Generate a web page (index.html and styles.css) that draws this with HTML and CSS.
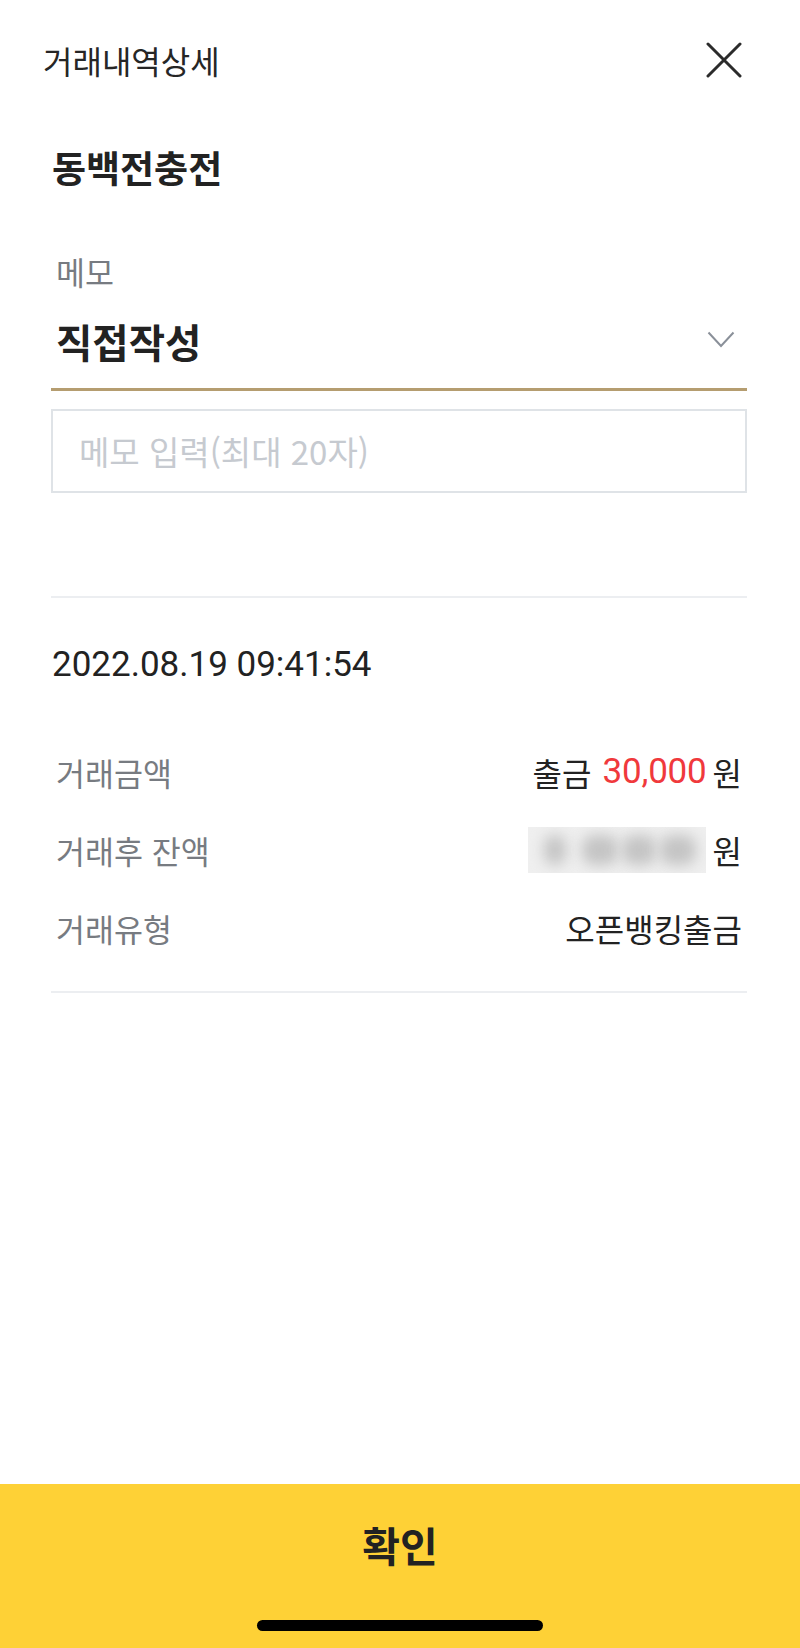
FILE: index.html
```html
<!DOCTYPE html>
<html lang="ko">
<head>
<meta charset="utf-8">
<title>거래내역상세</title>
<link rel="stylesheet" href="styles.css">
</head>
<body>
<div class="page">
  <header class="header">
    <h1 class="title">거래내역상세</h1>
    <button class="close" aria-label="닫기">
      <svg width="36" height="36" viewBox="0 0 36 36"><path d="M2 2 L34 34 M34 2 L2 34" stroke="#2b2b2b" stroke-width="3" stroke-linecap="round" fill="none"/></svg>
    </button>
  </header>

  <main class="content">
    <h2 class="merchant">동백전충전</h2>

    <div class="memo-label">메모</div>
    <div class="select">
      <span class="select-value">직접작성</span>
      <svg class="chev" width="28" height="17" viewBox="0 0 28 17"><path d="M1.5 1.5 L14 15 L26.5 1.5" stroke="#8a9099" stroke-width="2" fill="none"/></svg>
    </div>
    <div class="memo-input">메모 입력(최대 20자)</div>

    <div class="divider first"></div>

    <div class="date">2022.08.19 09:41:54</div>

    <div class="rows">
      <div class="row">
        <span class="label">거래금액</span>
        <span class="value">출금<span class="num red">30,000</span>원</span>
      </div>
      <div class="row">
        <span class="label">거래후 잔액</span>
        <span class="value"><span class="masked" aria-hidden="true"><span class="blob b1"></span><span class="blob b2"></span><span class="blob b3"></span><span class="blob b4"></span></span>원</span>
      </div>
      <div class="row">
        <span class="label">거래유형</span>
        <span class="value">오픈뱅킹출금</span>
      </div>
    </div>

    <div class="divider second"></div>
  </main>

  <footer class="confirm">
    <div class="confirm-label">확인</div>
    <div class="home-indicator"></div>
  </footer>
</div>
</body>
</html>
```

FILE: styles.css
```css
* { box-sizing: border-box; }
html, body { margin: 0; padding: 0; background: #fff; }
body {
  font-family: "Noto Sans CJK KR", "Noto Sans", sans-serif;
  color: #222;
}
.page {
  width: 800px;
  min-height: 1648px;
  display: flex;
  flex-direction: column;
}
.header {
  height: 120px;
  display: flex;
  align-items: center;
  justify-content: space-between;
  padding: 0 58px 0 43px;
}
.title {
  margin: 0;
  font-size: 32px;
  font-weight: 400;
  line-height: 40px;
  color: #262626;
}
.close {
  border: 0;
  background: none;
  padding: 0;
  width: 36px;
  height: 36px;
  display: block;
}
.close svg { display: block; }
.content {
  padding: 0 53px 0 51px;
  display: flex;
  flex-direction: column;
}
.merchant {
  margin: 27px 0 0 1px;
  font-size: 37px;
  font-weight: 700;
  line-height: 40px;
  color: #222;
}
.memo-label {
  margin: 66px 0 0 5px;
  font-size: 31.5px;
  line-height: 36px;
  color: #777b81;
}
.select {
  margin-top: 30px;
  padding: 0 12px 25px 5px;
  border-bottom: 3px solid #b59d70;
  display: flex;
  align-items: center;
  justify-content: space-between;
}
.select-value {
  font-size: 39.5px;
  font-weight: 700;
  line-height: 44px;
  color: #222;
}
.chev { display: block; margin-top: -3px; }
.memo-input {
  margin-top: 18px;
  height: 84px;
  border: 2px solid #dfe3e7;
  padding-left: 26px;
  display: flex;
  align-items: center;
  font-size: 33px;
  color: #c6cad0;
}
.divider {
  height: 2px;
  background: #eceef1;
}
.divider.first { margin-top: 103px; }
.divider.second { margin-top: 24px; }
.date {
  margin: 45px 0 0 1px;
  font-family: Roboto, "Noto Sans CJK KR", sans-serif;
  font-size: 35px;
  line-height: 44px;
  color: #222;
}
.rows {
  margin-top: 46px;
  display: flex;
  flex-direction: column;
}
.row {
  height: 78px;
  display: flex;
  align-items: center;
  justify-content: space-between;
  padding: 0 5px 0 5px;
}
.label {
  font-size: 31.5px;
  line-height: 40px;
  color: #777b81;
}
.value {
  font-size: 32px;
  line-height: 40px;
  color: #222;
  display: flex;
  align-items: center;
}
.num {
  font-family: Roboto, sans-serif;
  font-size: 35px;
  letter-spacing: -0.2px;
  margin: 0 6px 0 11px;
}
.red { color: #f0393c; }
.masked {
  display: flex;
  align-items: center;
  gap: 4px;
  width: 178px;
  height: 46px;
  margin-right: 7px;
  padding-left: 16px;
  background: #efefef;
  overflow: hidden;
}
.blob {
  display: block;
  height: 30px;
  border-radius: 12px;
  background: #c4c4c4;
  filter: blur(7px);
}
.b1 { width: 22px; }
.b2 { width: 36px; margin-left: 12px; }
.b3 { width: 34px; }
.b4 { width: 36px; }
.confirm {
  margin-top: auto;
  height: 164px;
  background: #fed136;
  display: flex;
  flex-direction: column;
  align-items: center;
  padding-top: 30px;
}
.confirm-label {
  font-size: 41px;
  font-weight: 700;
  line-height: 60px;
  color: #222;
}
.home-indicator {
  margin-top: 46px;
  width: 286px;
  height: 11px;
  border-radius: 6px;
  background: #000;
}
```
